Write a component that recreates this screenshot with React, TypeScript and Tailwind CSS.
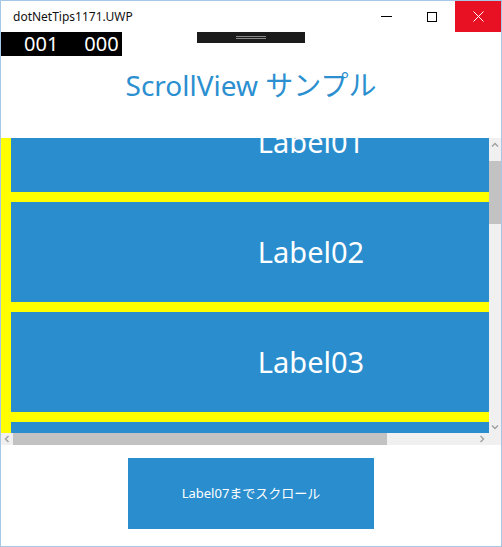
import React from "react";

const Chevron = ({ dir }: { dir: "up" | "down" | "left" | "right" }) => {
  const rot = { up: 0, right: 90, down: 180, left: 270 }[dir];
  return (
    <svg width="8" height="8" viewBox="0 0 8 8" style={{ transform: `rotate(${rot}deg)` }}>
      <path d="M1 5.5 L4 2.5 L7 5.5" fill="none" stroke="#a0a0a0" strokeWidth="1.4" />
    </svg>
  );
};

export default function App() {
  const labels = ["Label01", "Label02", "Label03", "Label04"];
  return (
    <div className="w-[502px] h-[547px] border border-[#a6c8e6] bg-white flex flex-col relative overflow-hidden font-['Noto_Sans','Noto_Sans_CJK_JP',sans-serif]">
      {/* title bar */}
      <div className="h-[31px] flex items-center shrink-0">
        <span className="pl-[12px] text-[12px] text-[#111]">dotNetTips1171.UWP</span>
        <div className="ml-auto flex h-full">
          <div className="w-[46px] flex items-center justify-center">
            <div className="w-[11px] h-px bg-black" />
          </div>
          <div className="w-[46px] flex items-center justify-center">
            <div className="w-[10px] h-[10px] border border-black" />
          </div>
          <div className="w-[46px] bg-[#e81123] flex items-center justify-center">
            <svg width="11" height="11" viewBox="0 0 11 11">
              <path d="M0.5 0.5 L10.5 10.5 M10.5 0.5 L0.5 10.5" stroke="white" strokeWidth="1" />
            </svg>
          </div>
        </div>
      </div>

      {/* header */}
      <div className="h-[106px] flex items-center justify-center shrink-0">
        <span className="text-[28px] text-[#2b8fd0] leading-none">ScrollView サンプル</span>
      </div>

      {/* frame counter overlay */}
      <div className="absolute left-[-1px] top-[31px] w-[122px] h-[24px] bg-black flex items-center text-white text-[20px] leading-none">
        <span className="ml-[24px]">001</span>
        <span className="ml-[26px]">000</span>
      </div>
      {/* debug toolbar overlay */}
      <div className="absolute left-[196px] top-[31px] w-[108px] h-[11px] bg-[#1b1b1b] flex flex-col items-center justify-center gap-[1px]">
        <div className="w-[30px] h-px bg-[#8a8a8a]" />
        <div className="w-[30px] h-px bg-[#8a8a8a]" />
      </div>

      {/* scroll viewer */}
      <div className="h-[307px] flex flex-col shrink-0">
        <div className="flex h-[295px]">
          <div className="w-[488px] h-full overflow-hidden">
            <div className="w-[610px] mt-[-46px] flex flex-col">
              {labels.map((l) => (
                <div
                  key={l}
                  className="h-[110px] shrink-0 border-l-[10px] border-b-[10px] border-[#ffff00] bg-[#2a8ece] flex items-center justify-center text-white text-[29px]"
                >
                  {l}
                </div>
              ))}
            </div>
          </div>
          <div className="w-[12px] h-full bg-[#f0f0f0] flex flex-col">
            <div className="h-[12px] flex items-center justify-center mt-[1px]">
              <Chevron dir="up" />
            </div>
            <div className="h-[10px]" />
            <div className="h-[63px] bg-[#c2c2c2]" />
            <div className="flex-1" />
            <div className="h-[12px] flex items-center justify-center">
              <Chevron dir="down" />
            </div>
          </div>
        </div>
        <div className="flex h-[12px]">
          <div className="w-[488px] h-full bg-[#f0f0f0] flex">
            <div className="w-[12px] flex items-center justify-center">
              <Chevron dir="left" />
            </div>
            <div className="w-[374px] bg-[#c2c2c2]" />
            <div className="flex-1" />
            <div className="w-[12px] flex items-center justify-center mr-[1px]">
              <Chevron dir="right" />
            </div>
          </div>
          <div className="w-[12px] h-full bg-[#f0f0f0]" />
        </div>
      </div>

      {/* button */}
      <div className="flex justify-center mt-[13px]">
        <div className="w-[246px] h-[71px] bg-[#2a8ece] text-white text-[13px] leading-none flex items-center justify-center">
          Label07までスクロール
        </div>
      </div>
    </div>
  );
}
